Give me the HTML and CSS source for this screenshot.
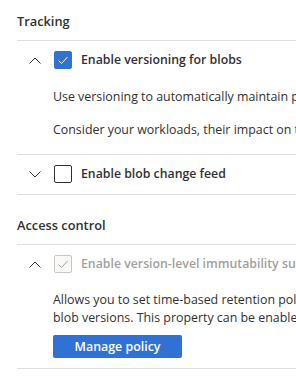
FILE: index.html
```html
<!DOCTYPE html>
<html lang="en">
<head>
    <meta charset="UTF-8">
    <meta name="viewport" content="width=device-width, initial-scale=1.0">
    <title>Data protection</title>
    <link rel="stylesheet" href="styles.css">
</head>
<body>
    <div class="panel">
        <!-- Tracking -->
        <h2 class="section-title">Tracking</h2>

        <div class="option">
            <div class="option-row">
                <svg class="chevron" viewBox="0 0 12 7" width="12" height="7"><path d="M0.5 6.5 L6 1 L11.5 6.5" /></svg>
                <span class="checkbox checked">
                    <svg viewBox="0 0 18 18" width="18" height="18"><path d="M4.5 9.5 L7.5 12.5 L13.5 6" /></svg>
                </span>
                <span class="option-label">Enable versioning for blobs</span>
            </div>
            <div class="option-body">
                <p class="desc">Use versioning to automatically maintain previous versions of your blobs.</p>
                <p class="desc">Consider your workloads, their impact on the number of versions created, and the resulting costs.</p>
            </div>
        </div>

        <div class="option">
            <div class="option-row">
                <svg class="chevron" viewBox="0 0 12 7" width="12" height="7"><path d="M0.5 0.5 L6 6 L11.5 0.5" /></svg>
                <span class="checkbox"></span>
                <span class="option-label">Enable blob change feed</span>
            </div>
        </div>

        <!-- Access control -->
        <h2 class="section-title spaced">Access control</h2>

        <div class="option">
            <div class="option-row">
                <svg class="chevron" viewBox="0 0 12 7" width="12" height="7"><path d="M0.5 6.5 L6 1 L11.5 6.5" /></svg>
                <span class="checkbox disabled">
                    <svg viewBox="0 0 18 18" width="18" height="18"><path d="M4.5 9.5 L7.5 12.5 L13.5 6" /></svg>
                </span>
                <span class="option-label muted">Enable version-level immutability support</span>
            </div>
            <div class="option-body tight">
                <p class="desc">Allows you to set time-based retention policy on the account-level that will apply to all<br>blob versions. This property can be enabled for existing storage accounts.</p>
                <button class="primary-btn">Manage policy</button>
            </div>
        </div>
    </div>
</body>
</html>
```

FILE: styles.css
```css
/* Base */
body {
    margin: 0;
    background-color: #ffffff;
    color: #323130;
    font-family: "Open Sans", "Noto Sans", Arial, sans-serif;
    font-size: 12.4px;
    overflow: hidden;
}

.panel {
    padding-left: 17px;
    width: 700px;
}

/* Section headings */
.section-title {
    margin: 0;
    padding: 11px 0 9px;
    font-size: 12.8px;
    font-weight: 600;
    line-height: 20px;
    border-bottom: 1px solid #e1dfdd;
}

.section-title.spaced {
    padding-top: 20px;
}

/* Collapsible options */
.option {
    border-bottom: 1px solid #e1dfdd;
}

.option-row {
    display: flex;
    align-items: center;
    height: 20px;
    padding: 9px 0 10px 12px;
}

.chevron {
    fill: none;
    stroke: #323130;
    stroke-width: 1;
    margin-right: 13px;
}

.checkbox {
    box-sizing: border-box;
    width: 18px;
    height: 18px;
    border: 1px solid #323130;
    border-radius: 2px;
    margin-right: 9px;
    display: flex;
}

.checkbox svg {
    fill: none;
    stroke-width: 1;
    margin: -1px;
}

.checkbox.checked {
    background-color: #2f72d3;
    border-color: #2f72d3;
}

.checkbox.checked svg {
    stroke: #ffffff;
}

.checkbox.disabled {
    border-color: #c8c6c4;
    background-color: #faf9f8;
}

.checkbox.disabled svg {
    stroke: #a19f9d;
}

.option-label {
    font-size: 12.3px;
    font-weight: 600;
    line-height: 20px;
    white-space: nowrap;
}

.option-label.muted {
    color: #a19f9d;
}

.option-body {
    padding: 8px 0 15px 36px;
}

.option-body.tight {
    padding: 7px 0 10px 36px;
}

.desc {
    margin: 0;
    line-height: 18px;
    white-space: nowrap;
}

.desc + .desc {
    margin-top: 15px;
}

/* Buttons */
.primary-btn {
    display: block;
    width: 129px;
    height: 23px;
    margin-top: 8px;
    padding: 0;
    font-family: inherit;
    font-size: 12.4px;
    font-weight: 600;
    color: #ffffff;
    background-color: #2f72d3;
    border: none;
    border-radius: 2px;
    cursor: pointer;
}
```
